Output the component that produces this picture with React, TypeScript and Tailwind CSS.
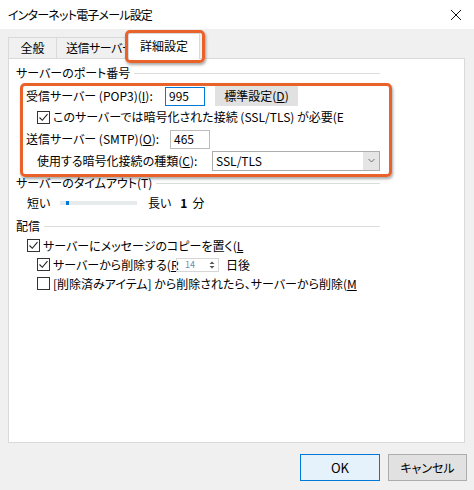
import React from 'react'

const FONT = "font-['Noto_Sans_CJK_JP','Noto_Sans',sans-serif] [font-feature-settings:'palt']"

function Check({ checked }: { checked: boolean }) {
  return (
    <div className="w-[13px] h-[13px] border border-[#333] bg-white flex items-center justify-center shrink-0">
      {checked && (
        <svg width="11" height="11" viewBox="0 0 11 11">
          <path d="M1.5 5.5 L4.3 8.3 L9.5 2.2" fill="none" stroke="#222" strokeWidth="1.1" />
        </svg>
      )}
    </div>
  )
}

function GroupHeader({ label }: { label: string }) {
  return (
    <div className="flex items-center h-[16px] w-[364px]">
      <span className="whitespace-nowrap">{label}</span>
      <div className="flex-1 ml-[4px] border-t border-[#dcdcdc]" />
    </div>
  )
}

export default function App() {
  return (
    <div className={`w-[474px] h-[490px] bg-[#f0f0f0] flex flex-col text-[12px] leading-none text-black relative ${FONT}`}>
      {/* title bar */}
      <div className="h-[29px] bg-white flex items-center justify-between pl-[8px] pr-[12px] shrink-0">
        <span className="text-[12px] tracking-[-0.8px]">インターネット電子メール設定</span>
        <svg width="12" height="12" viewBox="0 0 12 12">
          <path d="M1 1 L11 11 M11 1 L1 11" stroke="#111" strokeWidth="1" />
        </svg>
      </div>

      {/* tabs */}
      <div className="h-[29px] flex items-end pl-[8px] shrink-0">
        <div className="h-[21px] w-[49px] border border-b-0 border-[#d9d9d9] flex items-center justify-center">全般</div>
        <div className="h-[21px] w-[71px] border border-b-0 border-l-0 border-[#d9d9d9] flex items-center pl-[9px] whitespace-nowrap tracking-[-0.5px]">送信サーバー</div>
        <div className="h-[26px] w-[72px] -mb-px bg-white border border-b-0 border-[#d9d9d9] flex items-center justify-center relative z-10 pb-[2px]">詳細設定</div>
      </div>

      {/* panel */}
      <div className="flex-1 ml-[8px] w-[457px] bg-white border border-[#d9d9d9] pt-[6px] pl-[7px]">
        <GroupHeader label="サーバーのポート番号" />

        <div className="mt-[2px] ml-[4px] w-[372px] border-[3px] border-[#e8622a] rounded-[5px] shadow-[1px_2px_3px_rgba(0,0,0,0.35)] pl-[3px] pb-[3px]">
          <div className="h-[20px] flex items-center">
            <span className="w-[139px] whitespace-nowrap">受信サーバー (POP3)(<span className="underline">I</span>):</span>
            <div className="w-[40px] h-[19px] border border-[#0078d7] flex items-center pl-[3px]">995</div>
            <div className="ml-[10px] w-[83px] h-[20px] bg-[#e1e1e1] border border-[#e1e1e1] flex items-center justify-center">
              標準設定(<span className="underline">D</span>)
            </div>
          </div>
          <div className="h-[22px] flex items-center pl-[11px] gap-[3px]">
            <Check checked />
            <span className="whitespace-nowrap">このサーバーでは暗号化された接続 (SSL/TLS) が必要(E</span>
          </div>
          <div className="h-[20px] mt-[1px] flex items-center">
            <span className="w-[144px] whitespace-nowrap">送信サーバー (SMTP)(<span className="underline">O</span>):</span>
            <div className="w-[40px] h-[19px] border border-[#bcbcbc] flex items-center pl-[3px]">465</div>
          </div>
          <div className="h-[21px] mt-[1px] flex items-center pl-[11px]">
            <span className="w-[175px] whitespace-nowrap">使用する暗号化接続の種類(<span className="underline">C</span>):</span>
            <div className="w-[168px] h-[20px] border border-[#adadad] flex items-center justify-between">
              <span className="pl-[3px]">SSL/TLS</span>
              <div className="w-[16px] h-full bg-[#e5e5e5] flex items-center justify-center">
                <svg width="7" height="5" viewBox="0 0 7 5">
                  <path d="M0.5 1 L3.5 4 L6.5 1" fill="none" stroke="#606060" strokeWidth="0.9" />
                </svg>
              </div>
            </div>
          </div>
        </div>

        <div className="mt-[-2px]">
          <GroupHeader label="サーバーのタイムアウト(T)" />
        </div>
        <div className="h-[22px] flex items-center pl-[11px] mt-[1px]">
          <span className="w-[33px]">短い</span>
          <div className="w-[77px] h-[4px] bg-[#e7eaea] relative">
            <div className="absolute left-[6px] top-[0px] w-[3px] h-[4px] bg-[#0078d7]" />
          </div>
          <span className="ml-[11px]">長い</span>
          <span className="ml-[9px] font-bold">1</span>
          <span className="ml-[5px]">分</span>
        </div>

        <div className="mt-[4px]">
          <GroupHeader label="配信" />
        </div>
        <div className="h-[19px] mt-[2px] flex items-center pl-[11px] gap-[3px]">
          <Check checked />
          <span className="whitespace-nowrap">サーバーにメッセージのコピーを置く(<span className="underline">L</span></span>
        </div>
        <div className="h-[19px] flex items-center pl-[21px] gap-[3px]">
          <Check checked />
          <span className="w-[120px] whitespace-nowrap">サーバーから削除する(<span className="underline">R</span></span>
          <div className="w-[43px] h-[14px] border border-[#d6d6d6] flex items-center justify-between text-[9px] text-[#6d8db0]">
            <span className="pl-[8px]">14</span>
            <svg width="8" height="10" viewBox="0 0 8 10" className="mr-[2px]">
              <path d="M1.5 4 L4 1.5 L6.5 4 Z M1.5 6 L4 8.5 L6.5 6 Z" fill="#555" />
            </svg>
          </div>
          <span className="ml-[4px]">日後</span>
        </div>
        <div className="h-[19px] flex items-center pl-[21px] gap-[3px]">
          <Check checked={false} />
          <span className="whitespace-nowrap">[削除済みアイテム] から削除されたら、サーバーから削除(<span className="underline">M</span></span>
        </div>
      </div>

      {/* footer */}
      <div className="h-[47px] shrink-0 flex items-start justify-end pt-[11px] pr-[7px] gap-[8px]">
        <div className="w-[80px] h-[27px] bg-[#e5f1fb] border border-[#0078d7] flex items-center justify-center text-[13px]">OK</div>
        <div className="w-[79px] h-[27px] bg-[#e1e1e1] border border-[#adadad] flex items-center justify-center">キャンセル</div>
      </div>

      {/* annotation highlight over the selected tab */}
      <div className="absolute left-[125px] top-[30px] w-[80px] h-[33px] border-[3px] border-[#e8622a] rounded-[5px] shadow-[1px_2px_3px_rgba(0,0,0,0.35)] z-20" />
    </div>
  )
}
